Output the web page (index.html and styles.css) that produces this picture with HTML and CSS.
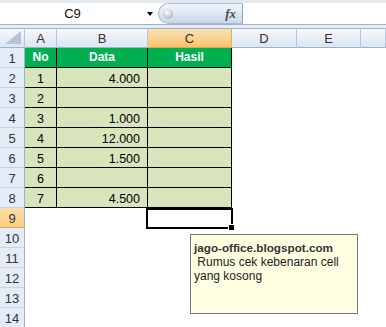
FILE: index.html
```html
<!DOCTYPE html>
<html lang="id">
<head>
    <meta charset="UTF-8">
    <title>Cek Cell Kosong</title>
    <link rel="stylesheet" href="styles.css">
</head>
<body>
    <div class="edge"></div>

    <div class="fbar">
        <div class="namebox">
            <span class="ref">C9</span>
            <span class="arrow"></span>
        </div>
        <div class="fxbtn">
            <span class="bead"></span>
            <span class="fx">fx</span>
        </div>
        <div class="formula"></div>
    </div>

    <div class="band"></div>

    <div class="sheet">
        <!-- column headers -->
        <div class="ch corner"></div>
        <div class="ch">A</div>
        <div class="ch">B</div>
        <div class="ch on">C</div>
        <div class="ch">D</div>
        <div class="ch">E</div>
        <div class="ch"></div>

        <div class="rh">1</div>
        <div class="t g">No</div>
        <div class="t g">Data</div>
        <div class="t g">Hasil</div>
        <div></div><div></div><div></div>

        <div class="rh">2</div>
        <div class="t ctr">1</div>
        <div class="t num">4.000</div>
        <div class="t"></div>
        <div></div><div></div><div></div>

        <div class="rh">3</div>
        <div class="t ctr">2</div>
        <div class="t num"></div>
        <div class="t"></div>
        <div></div><div></div><div></div>

        <div class="rh">4</div>
        <div class="t ctr">3</div>
        <div class="t num">1.000</div>
        <div class="t"></div>
        <div></div><div></div><div></div>

        <div class="rh">5</div>
        <div class="t ctr">4</div>
        <div class="t num">12.000</div>
        <div class="t"></div>
        <div></div><div></div><div></div>

        <div class="rh">6</div>
        <div class="t ctr">5</div>
        <div class="t num">1.500</div>
        <div class="t"></div>
        <div></div><div></div><div></div>

        <div class="rh">7</div>
        <div class="t ctr">6</div>
        <div class="t num"></div>
        <div class="t"></div>
        <div></div><div></div><div></div>

        <div class="rh">8</div>
        <div class="t ctr">7</div>
        <div class="t num">4.500</div>
        <div class="t"></div>
        <div></div><div></div><div></div>

        <div class="rh on">9</div>
        <div></div><div></div>
        <div class="sel"></div>
        <div></div><div></div><div></div>

        <div class="rh">10</div>
        <div></div><div></div><div></div><div></div><div></div><div></div>
        <div class="rh">11</div>
        <div></div><div></div><div></div><div></div><div></div><div></div>
        <div class="rh">12</div>
        <div></div><div></div><div></div><div></div><div></div><div></div>
        <div class="rh">13</div>
        <div></div><div></div><div></div><div></div><div></div><div></div>
        <div class="rh">14</div>
        <div></div><div></div><div></div><div></div><div></div><div></div>
    </div>

    <div class="comment">
        <b>jago-office.blogspot.com</b><br>
        &nbsp;Rumus cek kebenaran cell<br>
        yang kosong
    </div>
</body>
</html>
```

FILE: styles.css
```css
body {
    margin: 0;
    font-family: 'Liberation Sans', Arial, sans-serif;
    font-size: 12px;
    color: #000;
    background: #fff;
    overflow: hidden;
    position: relative;
}

.edge {
    height: 3px;
    background: #e3e9f1;
}

/* formula bar */
.fbar {
    display: flex;
    height: 21px;
    border-bottom: 1px solid #9db0c8;
    background: #fff;
}

.namebox {
    width: 155px;
    display: flex;
    align-items: center;
}

.namebox .ref {
    width: 145px;
    text-align: center;
    font-size: 13px;
    color: #111;
}

.namebox .arrow {
    width: 0;
    height: 0;
    margin-left: 2px;
    border-left: 3px solid transparent;
    border-right: 3px solid transparent;
    border-top: 4px solid #000;
}

.fxbtn {
    width: 85px;
    margin-left: 3px;
    box-sizing: border-box;
    border: 1px solid #a9bbd3;
    border-right-color: #8fa4c0;
    border-radius: 11px 0 0 11px;
    background: linear-gradient(#f3f6fb, #dbe5f2 55%, #c8d7eb);
    display: flex;
    align-items: center;
    justify-content: space-between;
    padding: 0 6px 0 4px;
}

.bead {
    width: 10px;
    height: 10px;
    border-radius: 50%;
    background: radial-gradient(circle at 40% 35%, #ffffff, #b7c1ce 65%, #8f9cad);
}

.fx {
    font-family: 'Liberation Serif', serif;
    font-style: italic;
    font-weight: bold;
    font-size: 13px;
    color: #4a4a4a;
}

.formula {
    flex: 1;
}

.band {
    height: 3px;
    background: #e6ecf3;
}

/* grid */
.sheet {
    display: grid;
    grid-template-columns: 25px 32px 91px 84px 65px 64px 25px;
    grid-auto-rows: 20px;
}

.sheet > div {
    box-sizing: border-box;
    line-height: 19px;
}

.ch {
    border-top: 1px solid #9eb2cb;
    border-bottom: 1px solid #9eb2cb;
    border-right: 1px solid #b8c7da;
    background: linear-gradient(#f5f8fc, #e8eef6 50%, #dde6f1);
    text-align: center;
    font-size: 13px;
    color: #333;
}

.ch.on {
    background: linear-gradient(#fbe2b2, #f8d393 50%, #f4c46e);
    border-bottom-color: #e3a64a;
    border-right-color: #e0b06a;
}

.corner {
    position: relative;
}

.corner::after {
    content: "";
    position: absolute;
    right: 3px;
    bottom: 3px;
    width: 16px;
    height: 13px;
    background: #b4c3d6;
    clip-path: polygon(100% 0, 100% 100%, 0 100%);
}

.rh {
    background: #e4ecf7;
    border-right: 1px solid #9eb2cb;
    border-bottom: 1px solid #c5d2e2;
    text-align: center;
    font-size: 13px;
    color: #333;
    padding-top: 1px;
}

.rh.on {
    background: linear-gradient(#fbdfa6, #f7cd83);
    border-bottom-color: #e3a64a;
}

.t {
    background: #d8e4bc;
    border-right: 1px solid #000;
    border-bottom: 1px solid #000;
    padding-top: 2px;
    font-size: 12.5px;
}

.t.g {
    background: #00b050;
    color: #fff;
    font-weight: bold;
    text-align: center;
    padding-top: 0;
    font-size: 12px;
}

.ctr {
    text-align: center;
}

.num {
    text-align: right;
    padding-right: 7px;
}

/* active cell */
.sel {
    position: relative;
}

.sel::before {
    content: "";
    position: absolute;
    top: 0;
    left: -2px;
    right: -1px;
    bottom: -1px;
    border: 2px solid #000;
}

.sel::after {
    content: "";
    position: absolute;
    right: -3px;
    bottom: -3px;
    width: 5px;
    height: 5px;
    background: #000;
    border: 1px solid #fff;
}

/* comment box */
.comment {
    position: absolute;
    left: 190px;
    top: 234px;
    width: 168px;
    height: 80px;
    box-sizing: border-box;
    padding: 6px 3px;
    background: #ffffe1;
    border: 1px solid #767676;
    line-height: 14px;
    font-size: 12px;
    color: #222;
}

.comment b {
    font-size: 11.7px;
    color: #333;
}
```
